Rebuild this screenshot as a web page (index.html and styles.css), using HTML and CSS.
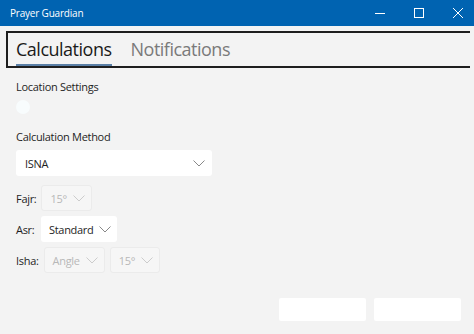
FILE: index.html
```html
<!DOCTYPE html>
<html lang="en">
<head>
    <meta charset="UTF-8">
    <title>Prayer Guardian</title>
    <link rel="stylesheet" href="styles.css">
</head>
<body>
    <div class="window">
        <div class="titlebar">
            <span class="title">Prayer Guardian</span>
            <div class="caption-buttons">
                <span class="caption-btn">
                    <svg width="10" height="10" viewBox="0 0 10 10"><path d="M0 5.5h10" stroke="#fff" stroke-width="1"/></svg>
                </span>
                <span class="caption-btn">
                    <svg width="10" height="10" viewBox="0 0 10 10"><rect x="0.5" y="0.5" width="9" height="9" fill="none" stroke="#fff" stroke-width="1"/></svg>
                </span>
                <span class="caption-btn">
                    <svg width="10" height="10" viewBox="0 0 10 10"><path d="M0 0L10 10M10 0L0 10" stroke="#fff" stroke-width="1"/></svg>
                </span>
            </div>
        </div>

        <div class="tabs">
            <span class="tab active">Calculations</span>
            <span class="tab">Notifications</span>
        </div>

        <div class="content">
            <div class="section-label">Location Settings</div>
            <div class="toggle"></div>

            <div class="section-label method-label">Calculation Method</div>
            <div class="select wide">
                <span>ISNA</span>
                <svg class="chev" width="12" height="7" viewBox="0 0 12 7"><path d="M0.5 0.5L6 6L11.5 0.5" fill="none" stroke="#888" stroke-width="1"/></svg>
            </div>

            <div class="row first">
                <span class="row-label">Fajr:</span>
                <div class="select disabled">
                    <span>15°</span>
                    <svg class="chev" width="12" height="7" viewBox="0 0 12 7"><path d="M0.5 0.5L6 6L11.5 0.5" fill="none" stroke="#ccc" stroke-width="1"/></svg>
                </div>
            </div>
            <div class="row">
                <span class="row-label">Asr:</span>
                <div class="select">
                    <span>Standard</span>
                    <svg class="chev" width="12" height="7" viewBox="0 0 12 7"><path d="M0.5 0.5L6 6L11.5 0.5" fill="none" stroke="#888" stroke-width="1"/></svg>
                </div>
            </div>
            <div class="row">
                <span class="row-label">Isha:</span>
                <div class="select disabled">
                    <span>Angle</span>
                    <svg class="chev" width="12" height="7" viewBox="0 0 12 7"><path d="M0.5 0.5L6 6L11.5 0.5" fill="none" stroke="#ccc" stroke-width="1"/></svg>
                </div>
                <div class="select disabled">
                    <span>15°</span>
                    <svg class="chev" width="12" height="7" viewBox="0 0 12 7"><path d="M0.5 0.5L6 6L11.5 0.5" fill="none" stroke="#ccc" stroke-width="1"/></svg>
                </div>
            </div>
        </div>

        <div class="footer">
            <button class="footer-btn"></button>
            <button class="footer-btn"></button>
        </div>
    </div>
</body>
</html>
```

FILE: styles.css
```css
* {
    margin: 0;
    padding: 0;
    box-sizing: border-box;
}

body {
    font-family: 'Open Sans', 'Noto Sans', sans-serif;
    background: #f3f3f3;
    width: 474px;
    height: 334px;
    overflow: hidden;
}

.window {
    height: 334px;
    display: flex;
    flex-direction: column;
    background: #f3f3f3;
}

.titlebar {
    height: 26px;
    background: #0063b1;
    color: #fff;
    display: flex;
    align-items: center;
    justify-content: space-between;
    padding-left: 10px;
}

.title {
    font-size: 10px;
    letter-spacing: -0.2px;
}

.caption-buttons {
    display: flex;
    height: 100%;
    margin-right: -3px;
}

.caption-btn {
    width: 39px;
    display: flex;
    align-items: center;
    justify-content: center;
}

.tabs {
    margin: 5px 4px 0 6px;
    height: 37px;
    border: 2px solid #1e1e1e;
    border-right: none;
    display: flex;
    align-items: flex-end;
    padding-left: 8px;
    gap: 19px;
}

.tab {
    font-size: 18px;
    letter-spacing: -0.5px;
    color: #7a7a7a;
    line-height: 26px;
    padding-bottom: 4px;
}

.tab.active {
    color: #1a1a1a;
    border-bottom: 2px solid #5a7fa6;
    padding-bottom: 2px;
}

.content {
    padding: 11px 16px 0;
    flex: 1;
}

.section-label {
    font-size: 11px;
    letter-spacing: -0.3px;
    color: #1e1e1e;
    line-height: 16px;
}

.toggle {
    width: 14px;
    height: 14px;
    border-radius: 50%;
    background: #f8fcfd;
    margin: 5px 0 0;
}

.method-label {
    margin-top: 15px;
}

.select {
    background: #fff;
    height: 26px;
    border-radius: 3px;
    display: flex;
    align-items: center;
    justify-content: space-between;
    padding: 0 6px 0 8px;
    gap: 6px;
    font-size: 11px;
    letter-spacing: -0.3px;
    color: #1e1e1e;
}

.select.wide {
    width: 196px;
    margin-top: 5px;
    padding: 0 7px 0 9px;
}

.select.disabled {
    background: #f6f6f6;
    border: 1px solid #ebebeb;
    color: #b8b8b8;
}

.row {
    display: flex;
    align-items: center;
    gap: 5px;
    margin-top: 5px;
}

.row.first {
    margin-top: 9px;
}

.row-label {
    font-size: 11px;
    letter-spacing: -0.3px;
    color: #1e1e1e;
    min-width: 20px;
}

.footer {
    display: flex;
    justify-content: flex-end;
    gap: 8px;
    padding: 0 13px 13px 0;
}

.footer-btn {
    width: 87px;
    height: 23px;
    background: #fff;
    border: none;
    border-radius: 2px;
}
```
